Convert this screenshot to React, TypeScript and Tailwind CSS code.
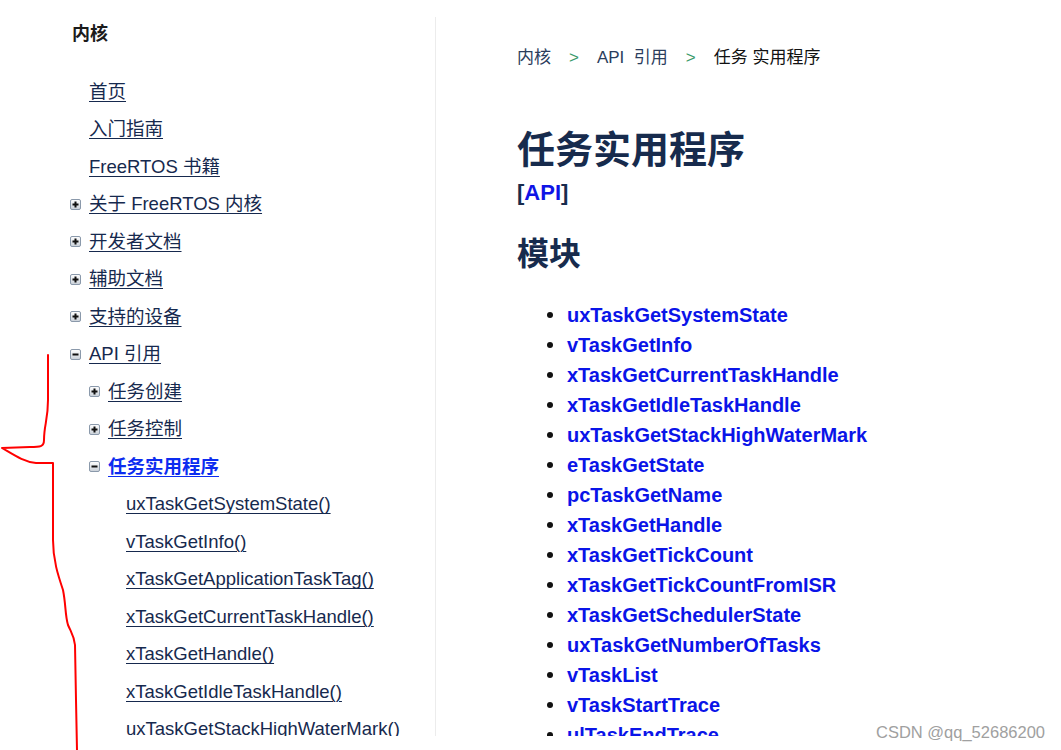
import React from 'react'

type NavItem = {
    label: string
    level: number
    icon?: "plus" | "minus"
    active?: boolean
}

const navItems: NavItem[] = [
    {label: "首页", level: 0},
    {label: "入门指南", level: 0},
    {label: "FreeRTOS 书籍", level: 0},
    {label: "关于 FreeRTOS 内核", level: 0, icon: "plus"},
    {label: "开发者文档", level: 0, icon: "plus"},
    {label: "辅助文档", level: 0, icon: "plus"},
    {label: "支持的设备", level: 0, icon: "plus"},
    {label: "API 引用", level: 0, icon: "minus"},
    {label: "任务创建", level: 1, icon: "plus"},
    {label: "任务控制", level: 1, icon: "plus"},
    {label: "任务实用程序", level: 1, icon: "minus", active: true},
    {label: "uxTaskGetSystemState()", level: 2},
    {label: "vTaskGetInfo()", level: 2},
    {label: "xTaskGetApplicationTaskTag()", level: 2},
    {label: "xTaskGetCurrentTaskHandle()", level: 2},
    {label: "xTaskGetHandle()", level: 2},
    {label: "xTaskGetIdleTaskHandle()", level: 2},
    {label: "uxTaskGetStackHighWaterMark()", level: 2},
]

const modules = [
    "uxTaskGetSystemState",
    "vTaskGetInfo",
    "xTaskGetCurrentTaskHandle",
    "xTaskGetIdleTaskHandle",
    "uxTaskGetStackHighWaterMark",
    "eTaskGetState",
    "pcTaskGetName",
    "xTaskGetHandle",
    "xTaskGetTickCount",
    "xTaskGetTickCountFromISR",
    "xTaskGetSchedulerState",
    "uxTaskGetNumberOfTasks",
    "vTaskList",
    "vTaskStartTrace",
    "ulTaskEndTrace",
]

function ToggleIcon({kind}: {kind: "plus" | "minus"}) {
    return (
        <svg width="11" height="11" viewBox="0 0 11 11" className="shrink-0">
            <defs>
                <linearGradient id={"g" + kind} x1="0" y1="0" x2="0" y2="1">
                    <stop offset="0" stopColor="#ffffff" />
                    <stop offset="1" stopColor="#c9d0d8" />
                </linearGradient>
            </defs>
            <rect x="0.5" y="0.5" width="10" height="10" rx="1.5" fill={"url(#g" + kind + ")"} stroke="#8a99ab" />
            <rect x="2.5" y="4.5" width="6" height="2" fill="#111" />
            {kind === "plus" && <rect x="4.5" y="2.5" width="2" height="6" fill="#111" />}
        </svg>
    )
}

// left padding per level: with a toggle icon / plain text
const iconPad = ["pl-[70px]", "pl-[89px]"]
const textPad = ["pl-[89px]", "pl-[108px]", "pl-[126px]"]

function App() {
    return (
        <div className="relative w-[1061px] h-[750px] bg-white overflow-hidden font-['Liberation_Sans','Noto_Sans_CJK_SC',sans-serif]">
            <div className="flex h-[736px] overflow-hidden">
                <aside className="w-[436px] shrink-0 mt-[17px] border-r border-[#ececec]">
                    <h2 className="pl-[72px] pt-[2px] text-[18px] leading-[26px] font-bold text-[#1b1b1b] font-['Noto_Sans_CJK_SC',serif]">
                        内核
                    </h2>
                    <ul className="mt-[28px]">
                        {navItems.map((item) => (
                            <li
                                key={item.label}
                                className={`flex items-center h-[37.5px] ${item.icon ? iconPad[item.level] : textPad[item.level]}`}
                            >
                                {item.icon && (
                                    <span className="mr-[8px] flex">
                                        <ToggleIcon kind={item.icon} />
                                    </span>
                                )}
                                <a
                                    href="#"
                                    className={`text-[18.5px] underline underline-offset-[3px] decoration-1 whitespace-nowrap ${item.active ? "font-bold text-[#0c2cf0]" : "text-[#16294e]"}`}
                                >
                                    {item.label}
                                </a>
                            </li>
                        ))}
                    </ul>
                </aside>

                <main className="pl-[81px] pt-[45px]">
                    <nav className="flex items-center text-[17px] leading-[26px]">
                        <span className="text-[#2b3d5c]">内核</span>
                        <span className="text-[#3a9a6a] px-[18px]">&gt;</span>
                        <span className="text-[#2b3d5c]">API&nbsp; 引用</span>
                        <span className="text-[#3a9a6a] px-[18px]">&gt;</span>
                        <span className="text-[#111]">任务 实用程序</span>
                    </nav>

                    <h1 className="mt-[54px] text-[38px] leading-[50px] font-bold text-[#172b4d]">任务实用程序</h1>
                    <div className="mt-[4px] text-[22px] leading-[28px] font-bold text-[#172b4d]">
                        [<a href="#" className="text-[#0f14e6]">API</a>]
                    </div>

                    <h2 className="mt-[24px] text-[32px] leading-[46px] font-bold text-[#172b4d]">模块</h2>

                    <ul className="mt-[23px] pl-[30px]">
                        {modules.map((m) => (
                            <li key={m} className="flex items-center h-[30px]">
                                <span className="w-[6px] h-[6px] rounded-full bg-[#111] mr-[14px]" />
                                <a href="#" className="text-[20px] leading-[30px] font-bold text-[#0a14e8]">
                                    {m}
                                </a>
                            </li>
                        ))}
                    </ul>
                </main>
            </div>

            <svg className="absolute left-0 top-0 pointer-events-none" width="100" height="750" viewBox="0 0 100 750">
                <path
                    d="M48 355 L48 400 C48 420 44 425 44 440 C44 447 40 447 30 447 L2 448 C14 455 24 462 36 463 L53 463 L53 540 C53 560 58 575 63 590 C66 605 65 615 68 625 C72 634 74 636 75 645 L76 700 L77 750"
                    fill="none"
                    stroke="#ff0000"
                    strokeWidth="2"
                    strokeLinejoin="round"
                    strokeLinecap="round"
                />
            </svg>

            <div className="absolute left-[876px] top-[723px] text-[16.5px] leading-[18px] text-[#a0a0a0]">
                CSDN @qq_52686200
            </div>
        </div>
    )
}

export default App
